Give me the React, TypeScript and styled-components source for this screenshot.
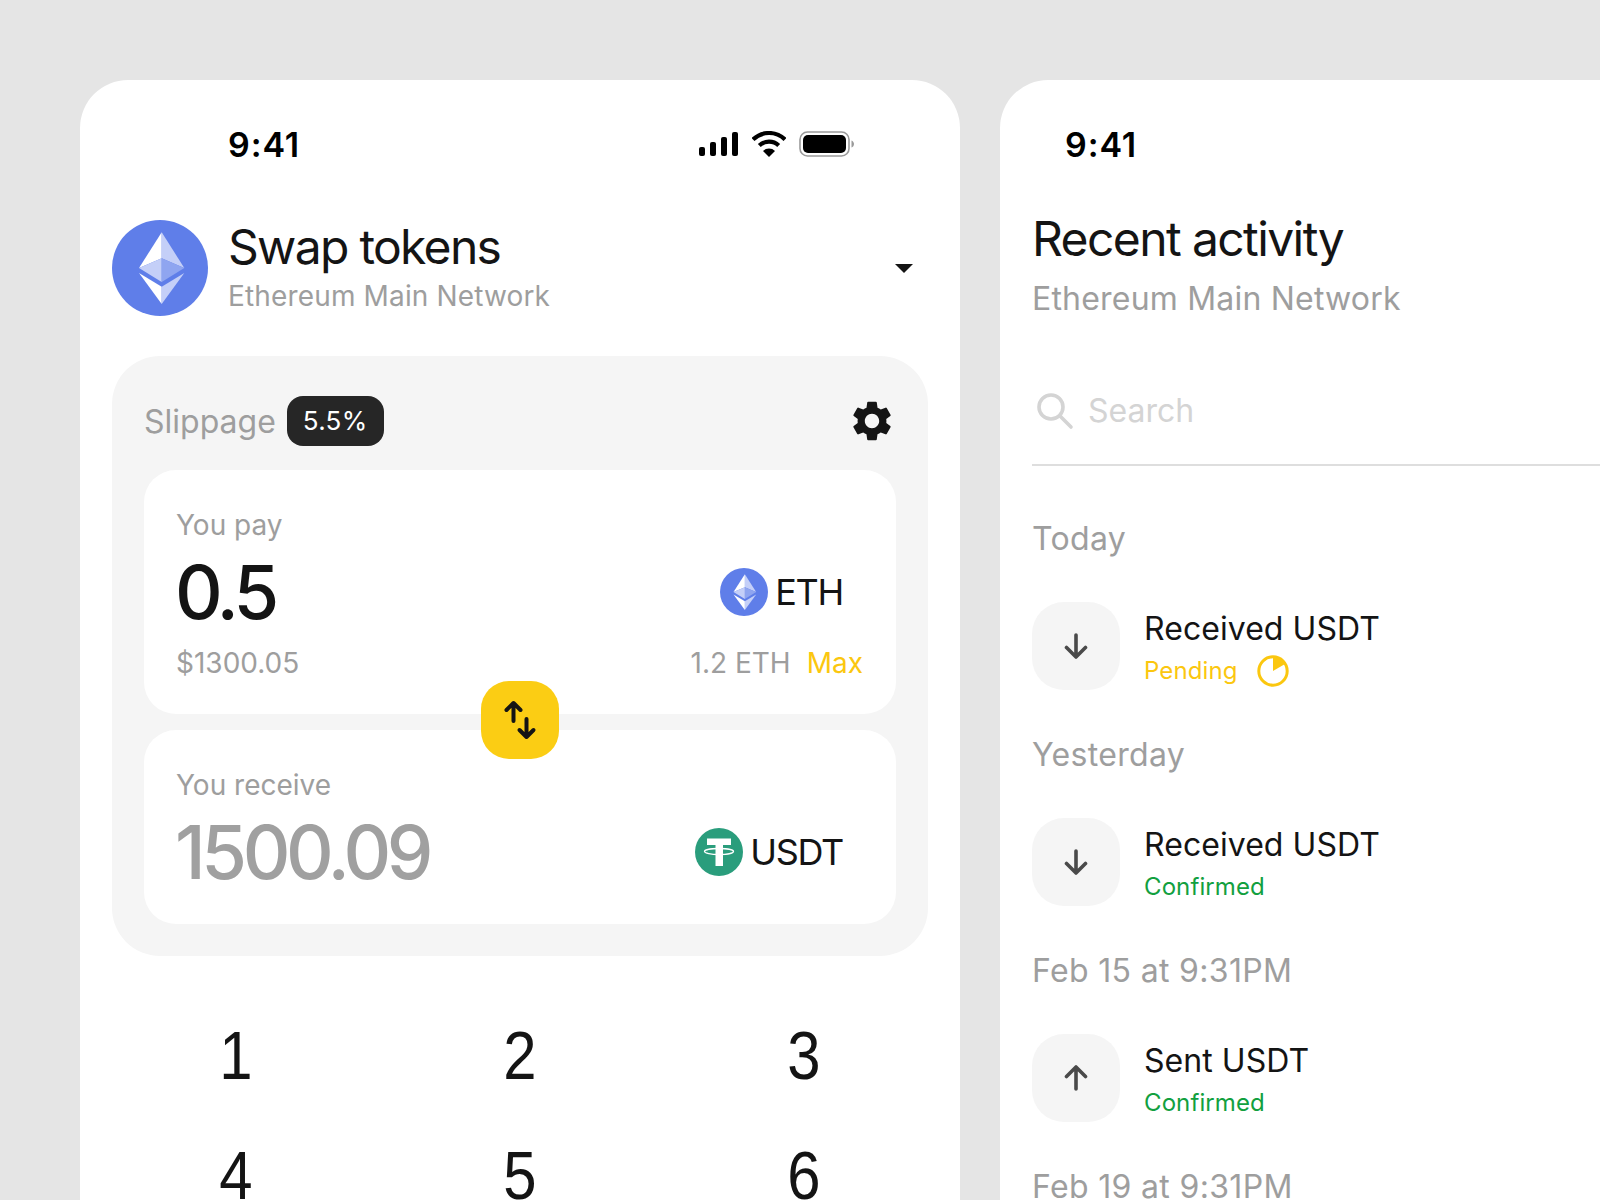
import React from "react";
import styled, { createGlobalStyle } from "styled-components";
import { MdSettings } from "react-icons/md";

const GlobalStyle = createGlobalStyle`
  html, body {
    margin: 0;
    padding: 0;
    background: #e5e5e5;
  }
  body {
    font-family: Inter, "Liberation Sans", sans-serif;
    color: #141414;
  }
`;

const Page = styled.div`
  display: flex;
  gap: 40px;
  width: 1600px;
  height: 1200px;
  box-sizing: border-box;
  padding: 80px 0 0 80px;
  overflow: hidden;
  background: #e5e5e5;
`;

const Phone = styled.section`
  flex: none;
  width: 880px;
  height: 1300px;
  box-sizing: border-box;
  padding: 0 32px;
  background: #fff;
  border-radius: 48px;
`;

const StatusBar = styled.div<{ $inset: number }>`
  display: flex;
  align-items: center;
  justify-content: space-between;
  height: 128px;
  padding: 0 106px 0 ${(p) => p.$inset}px;
  margin: 0 -32px;
  box-sizing: border-box;
`;

const Clock = styled.span`
  font-size: 34px;
  font-weight: 600;
  color: #000;
  letter-spacing: 0.9px;
`;

const StatusIcons = styled.div`
  display: flex;
  align-items: center;
  gap: 13px;
`;

const Header = styled.header`
  display: flex;
  align-items: center;
  gap: 20px;
  height: 96px;
  margin-top: 12px;
`;

const HeaderText = styled.div`
  flex: 1;
  align-self: flex-start;
  display: flex;
  flex-direction: column;
  padding-top: 1px;
`;

const Title = styled.h1`
  margin: 0;
  font-size: 48px;
  line-height: 52px;
  font-weight: 400;
  letter-spacing: -1.7px;
`;

const Network = styled.div`
  margin-top: 5px;
  font-size: 28px;
  line-height: 36px;
  color: #9e9e9e;
  letter-spacing: 0.15px;
`;

const Caret = styled.div`
  width: 0;
  height: 0;
  margin-right: 15px;
  border-left: 9px solid transparent;
  border-right: 9px solid transparent;
  border-top: 9px solid #141414;
`;

const SwapPanel = styled.div`
  position: relative;
  margin-top: 40px;
  padding: 16px 32px 32px;
  height: 600px;
  box-sizing: border-box;
  background: #f5f5f5;
  border-radius: 48px;
`;

const SlippageRow = styled.div`
  display: flex;
  align-items: center;
  gap: 11px;
  height: 98px;
  color: #9e9e9e;
  font-size: 32px;
`;

const Badge = styled.span`
  padding: 0 16px;
  height: 50px;
  line-height: 50px;
  border-radius: 16px;
  background: #262626;
  color: #fff;
  font-size: 26px;
  letter-spacing: 0.3px;
`;

const GearSlot = styled.div`
  margin-left: auto;
  display: flex;
  color: #141414;
`;

const TokenCard = styled.div<{ $height: number }>`
  display: flex;
  flex-direction: column;
  height: ${(p) => p.$height}px;
  box-sizing: border-box;
  padding: 38px 32px 0;
  margin-bottom: 16px;
  background: #fff;
  border-radius: 32px;
`;

const CardLabel = styled.div`
  font-size: 28px;
  line-height: 34px;
  color: #9e9e9e;
`;

const AmountRow = styled.div`
  display: flex;
  align-items: center;
  justify-content: space-between;
  height: 86px;
  margin-top: 7px;
`;

const Amount = styled.div<{ $muted?: boolean }>`
  margin-left: -1px;
  font-size: 74px;
  line-height: 86px;
  font-weight: 500;
  letter-spacing: -4.4px;
  color: ${(p) => (p.$muted ? "#a0a0a0" : "#141414")};
`;

const Token = styled.div`
  display: flex;
  align-items: center;
  gap: 7px;
  margin-right: 21px;
  font-size: 36px;
  letter-spacing: -1.3px;
`;

const BalanceRow = styled.div`
  display: flex;
  justify-content: space-between;
  margin-top: 11px;
  font-size: 28px;
  line-height: 34px;
  color: #9e9e9e;
`;

const WalletBalance = styled.span`
  margin-right: 1px;
`;

const Max = styled.span`
  margin-left: 16px;
  color: #fbc70f;
`;

const SwapButton = styled.button`
  position: absolute;
  left: 369px;
  top: 325px;
  width: 78px;
  height: 78px;
  padding: 0;
  display: flex;
  align-items: center;
  justify-content: center;
  border: 0;
  border-radius: 28px;
  background: #fbcd14;
`;

const Keypad = styled.div`
  display: grid;
  grid-template-columns: repeat(3, 284px);
  grid-auto-rows: 120px;
  margin: 39px 0 0 -18px;
  justify-items: center;
  align-items: center;
`;

const Key = styled.div`
  font-family: "Liberation Sans", Arial, sans-serif;
  font-size: 68px;
  line-height: 72px;
  transform: scaleX(0.88);
`;

const ActivityTitle = styled.h2`
  margin: 0;
  padding-top: 2px;
  font-size: 48px;
  line-height: 58px;
  font-weight: 400;
  letter-spacing: -1.6px;
`;

const ActivityNetwork = styled.div`
  margin-top: 11px;
  font-size: 32px;
  line-height: 40px;
  color: #9e9e9e;
  letter-spacing: 0.2px;
`;

const SearchBar = styled.div`
  display: flex;
  align-items: center;
  gap: 14px;
  height: 109px;
  margin: 38px 0 53px;
  box-sizing: border-box;
  border-bottom: 2px solid #dedede;
  color: #d4d4d4;
  font-size: 32px;
  padding: 0 0 0 4px;
`;

const SectionLabel = styled.div`
  margin-top: 45px;
  font-size: 32px;
  line-height: 40px;
  color: #9e9e9e;
  letter-spacing: 0.33px;
`;

const ActivityRow = styled.div`
  display: flex;
  align-items: center;
  gap: 24px;
  margin-top: 43px;
  height: 88px;
`;

const ArrowTile = styled.div`
  display: flex;
  align-items: center;
  justify-content: center;
  width: 88px;
  height: 88px;
  border-radius: 32px;
  background: #f5f5f5;
`;

const RowText = styled.div`
  display: flex;
  flex-direction: column;
  gap: 6px;
  margin-top: 3px;
`;

const RowTitle = styled.div`
  font-size: 32px;
  line-height: 40px;
  letter-spacing: 0.05px;
`;

const RowStatus = styled.div<{ $tone: "pending" | "confirmed" }>`
  display: flex;
  align-items: center;
  gap: 20px;
  font-size: 24px;
  line-height: 32px;
  letter-spacing: 0.1px;
  color: ${(p) => (p.$tone === "pending" ? "#fbc70f" : "#12a03f")};
`;

const EthLogo = ({ size }: { size: number }) => (
  <svg width={size} height={size} viewBox="0 0 96 96">
    <circle cx="48" cy="48" r="48" fill="#5f7ee9" />
    <polygon points="49.7,12.3 27,48 49.7,38.3" fill="#fff" />
    <polygon points="49.7,12.3 72.3,48 49.7,38.3" fill="#c4cff8" />
    <polygon points="27,48 49.7,38.3 49.7,62" fill="#c4cff8" />
    <polygon points="72.3,48 49.7,38.3 49.7,62" fill="#8fa5f0" />
    <polygon points="27,53 49.7,66.7 49.7,84" fill="#fff" />
    <polygon points="72.3,53 49.7,66.7 49.7,84" fill="#c4cff8" />
  </svg>
);

const TetherLogo = () => (
  <svg width="48" height="48" viewBox="0 0 48 48">
    <circle cx="24" cy="24" r="24" fill="#2a9d7c" />
    <path d="M12 10.5h24v6.5h-8v21h-7.5V17H12z" fill="#fff" />
    <ellipse cx="24" cy="23.5" rx="14.5" ry="3" fill="none" stroke="#fff" strokeWidth="1.3" />
  </svg>
);

const SignalIcons = () => (
  <StatusIcons>
    <svg width="40" height="26" viewBox="0 0 40 26" fill="#000">
      <rect x="0" y="16" width="6" height="9" rx="2" />
      <rect x="11" y="11" width="6" height="14" rx="2" />
      <rect x="22" y="6" width="6" height="19" rx="2" />
      <rect x="33" y="1" width="6" height="24" rx="2" />
    </svg>
    <svg width="34" height="26" viewBox="0 0 34 26">
      <path d="M1 8.5a23 23 0 0 1 32 0" fill="none" stroke="#000" strokeWidth="4.2" />
      <path d="M7.3 14.6a14 14 0 0 1 19.4 0" fill="none" stroke="#000" strokeWidth="4.2" />
      <path d="M17 26l-6-6a8.5 8.5 0 0 1 12 0z" fill="#000" />
    </svg>
    <svg width="55" height="26" viewBox="0 0 55 26">
      <rect x="1" y="1" width="49" height="24" rx="7.5" fill="none" stroke="#9a9a9a" strokeWidth="1.6" />
      <rect x="4" y="4" width="43" height="18" rx="5" fill="#000" />
      <path d="M52.5 9.5c1.5.5 2.5 2 2.5 3.5s-1 3-2.5 3.5z" fill="#9a9a9a" />
    </svg>
  </StatusIcons>
);

const SwapArrows = () => (
  <svg width="36" height="40" viewBox="0 0 36 40" fill="none" stroke="#141414" strokeWidth="4" strokeLinecap="round" strokeLinejoin="round">
    <path d="M11.5 21V3M4.5 10L11.5 3l7 7" />
    <path d="M24.5 19v18M17.5 30L24.5 37l7-7" />
  </svg>
);

const ArrowGlyph = ({ up }: { up?: boolean }) => (
  <svg width="24" height="28" viewBox="0 0 24 28" fill="none" stroke="#4a4a4a" strokeWidth="3.6" strokeLinecap="round" strokeLinejoin="round">
    {up ? <path d="M12 25V3M2.5 12.5L12 3l9.5 9.5" /> : <path d="M12 3v22M2.5 15.5L12 25l9.5-9.5" />}
  </svg>
);

const PendingRing = () => (
  <svg width="32" height="32" viewBox="0 0 32 32">
    <circle cx="16" cy="16" r="14.2" fill="none" stroke="#fbc70f" strokeWidth="3" />
    <path d="M16 16V2a14 14 0 0 1 12 7z" fill="#fbc70f" />
  </svg>
);

const SearchGlyph = () => (
  <svg width="38" height="38" viewBox="0 0 38 38" fill="none" stroke="#d4d4d4" strokeWidth="3.6" strokeLinecap="round">
    <circle cx="15" cy="15" r="12" />
    <path d="M24 24l11 11" />
  </svg>
);

const activity = [
  { day: "Today", title: "Received USDT", status: "Pending" },
  { day: "Yesterday", title: "Received USDT", status: "Confirmed" },
  { day: "Feb 15 at 9:31PM", title: "Sent USDT", status: "Confirmed", up: true },
  { day: "Feb 19 at 9:31PM", title: "Sent USDT", status: "Confirmed", up: true },
];

const App: React.FC = () => (
  <Page>
    <GlobalStyle />
    <Phone>
      <StatusBar $inset={148}>
        <Clock>9:41</Clock>
        <SignalIcons />
      </StatusBar>
      <Header>
        <EthLogo size={96} />
        <HeaderText>
          <Title>Swap tokens</Title>
          <Network>Ethereum Main Network</Network>
        </HeaderText>
        <Caret />
      </Header>
      <SwapPanel>
        <SlippageRow>
          Slippage
          <Badge>5.5%</Badge>
          <GearSlot>
            <MdSettings size={48} />
          </GearSlot>
        </SlippageRow>
        <TokenCard $height={244}>
          <CardLabel>You pay</CardLabel>
          <AmountRow>
            <Amount>0.5</Amount>
            <Token>
              <EthLogo size={48} />
              ETH
            </Token>
          </AmountRow>
          <BalanceRow>
            <span>$1300.05</span>
            <WalletBalance>
              1.2 ETH<Max>Max</Max>
            </WalletBalance>
          </BalanceRow>
        </TokenCard>
        <TokenCard $height={194}>
          <CardLabel>You receive</CardLabel>
          <AmountRow>
            <Amount $muted>1500.09</Amount>
            <Token>
              <TetherLogo />
              USDT
            </Token>
          </AmountRow>
        </TokenCard>
        <SwapButton>
          <SwapArrows />
        </SwapButton>
      </SwapPanel>
      <Keypad>
        {[1, 2, 3, 4, 5, 6].map((n) => (
          <Key key={n}>{n}</Key>
        ))}
      </Keypad>
    </Phone>
    <Phone>
      <StatusBar $inset={65}>
        <Clock>9:41</Clock>
      </StatusBar>
      <ActivityTitle>Recent activity</ActivityTitle>
      <ActivityNetwork>Ethereum Main Network</ActivityNetwork>
      <SearchBar>
        <SearchGlyph />
        Search
      </SearchBar>
      {activity.map((item, i) => (
        <React.Fragment key={i}>
          <SectionLabel>{item.day}</SectionLabel>
          <ActivityRow>
            <ArrowTile>
              <ArrowGlyph up={item.up} />
            </ArrowTile>
            <RowText>
              <RowTitle>{item.title}</RowTitle>
              <RowStatus $tone={item.status === "Pending" ? "pending" : "confirmed"}>
                {item.status}
                {item.status === "Pending" && <PendingRing />}
              </RowStatus>
            </RowText>
          </ActivityRow>
        </React.Fragment>
      ))}
    </Phone>
  </Page>
);

export default App;
